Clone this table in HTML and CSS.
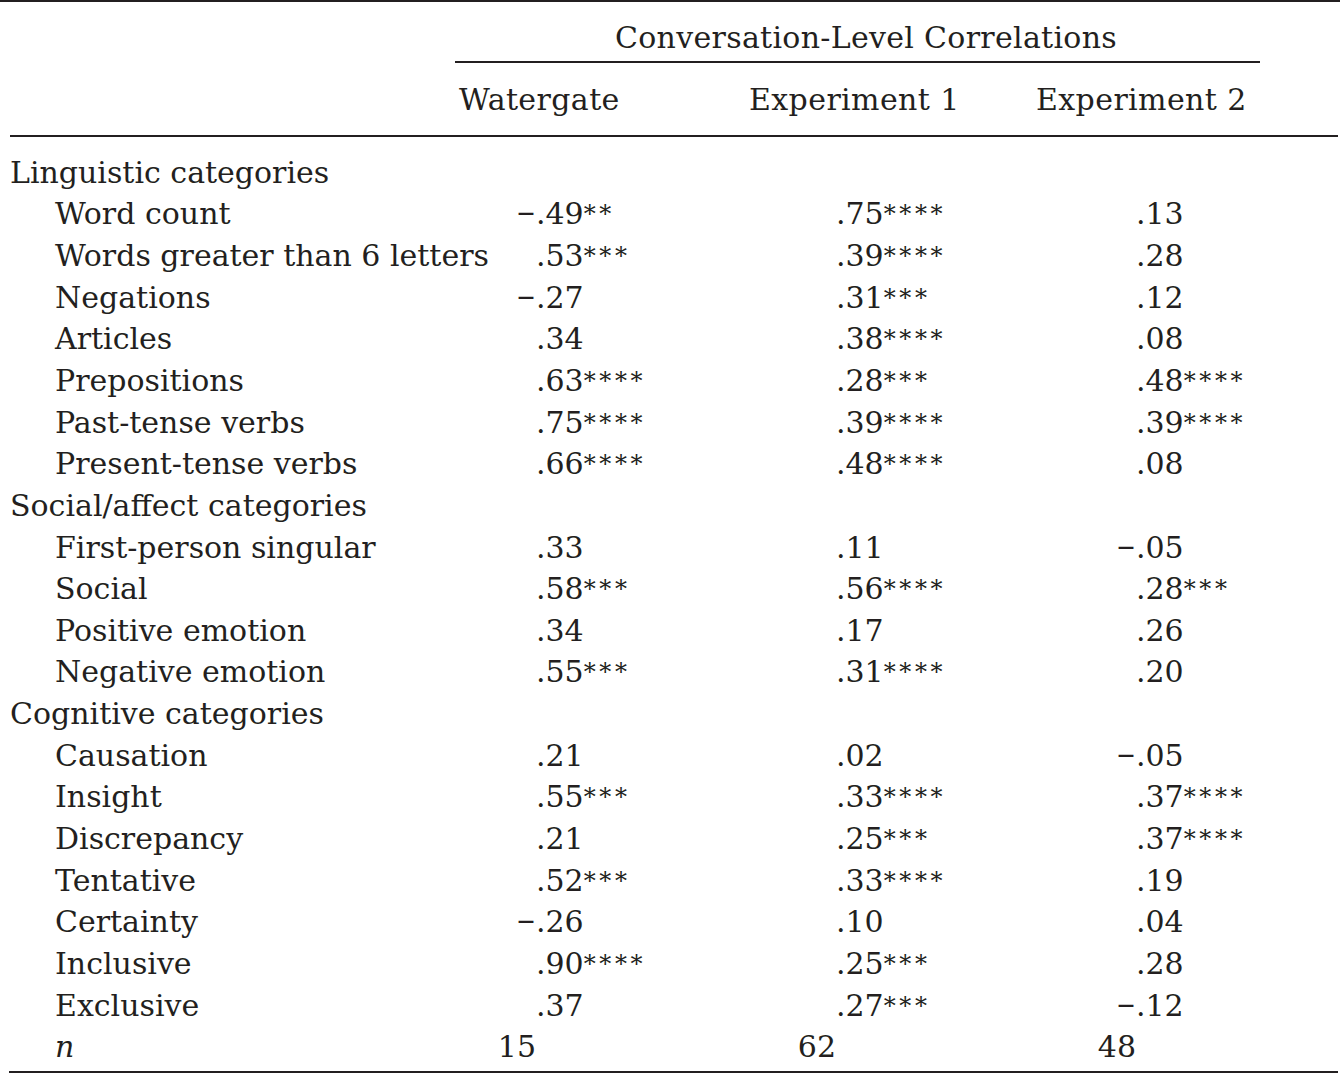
FILE: index.html
```html
<!DOCTYPE html>
<html lang="en">
<head>
<meta charset="utf-8">
<title>Conversation-Level Correlations</title>
<link rel="stylesheet" href="styles.css">
</head>
<body>
<div class="table">
  <div class="spanner-row">
    <div class="spanner">Conversation-Level Correlations</div>
  </div>
  <div class="head-row">
    <div></div>
    <div class="h">Watergate</div>
    <div class="h">Experiment 1</div>
    <div class="h">Experiment 2</div>
  </div>
  <div class="body">
    <div class="row"><div class="label">Linguistic categories</div></div>

    <div class="row"><div class="label sub">Word count</div>
      <div class="num"><span class="int neg">–</span>.49<span class="sig">**</span></div>
      <div class="num"><span class="int"></span>.75<span class="sig">****</span></div>
      <div class="num"><span class="int"></span>.13</div></div>

    <div class="row"><div class="label sub">Words greater than 6 letters</div>
      <div class="num"><span class="int"></span>.53<span class="sig">***</span></div>
      <div class="num"><span class="int"></span>.39<span class="sig">****</span></div>
      <div class="num"><span class="int"></span>.28</div></div>

    <div class="row"><div class="label sub">Negations</div>
      <div class="num"><span class="int neg">–</span>.27</div>
      <div class="num"><span class="int"></span>.31<span class="sig">***</span></div>
      <div class="num"><span class="int"></span>.12</div></div>

    <div class="row"><div class="label sub">Articles</div>
      <div class="num"><span class="int"></span>.34</div>
      <div class="num"><span class="int"></span>.38<span class="sig">****</span></div>
      <div class="num"><span class="int"></span>.08</div></div>

    <div class="row"><div class="label sub">Prepositions</div>
      <div class="num"><span class="int"></span>.63<span class="sig">****</span></div>
      <div class="num"><span class="int"></span>.28<span class="sig">***</span></div>
      <div class="num"><span class="int"></span>.48<span class="sig">****</span></div></div>

    <div class="row"><div class="label sub">Past-tense verbs</div>
      <div class="num"><span class="int"></span>.75<span class="sig">****</span></div>
      <div class="num"><span class="int"></span>.39<span class="sig">****</span></div>
      <div class="num"><span class="int"></span>.39<span class="sig">****</span></div></div>

    <div class="row"><div class="label sub">Present-tense verbs</div>
      <div class="num"><span class="int"></span>.66<span class="sig">****</span></div>
      <div class="num"><span class="int"></span>.48<span class="sig">****</span></div>
      <div class="num"><span class="int"></span>.08</div></div>

    <div class="row"><div class="label">Social/affect categories</div></div>

    <div class="row"><div class="label sub">First-person singular</div>
      <div class="num"><span class="int"></span>.33</div>
      <div class="num"><span class="int"></span>.11</div>
      <div class="num"><span class="int neg">–</span>.05</div></div>

    <div class="row"><div class="label sub">Social</div>
      <div class="num"><span class="int"></span>.58<span class="sig">***</span></div>
      <div class="num"><span class="int"></span>.56<span class="sig">****</span></div>
      <div class="num"><span class="int"></span>.28<span class="sig">***</span></div></div>

    <div class="row"><div class="label sub">Positive emotion</div>
      <div class="num"><span class="int"></span>.34</div>
      <div class="num"><span class="int"></span>.17</div>
      <div class="num"><span class="int"></span>.26</div></div>

    <div class="row"><div class="label sub">Negative emotion</div>
      <div class="num"><span class="int"></span>.55<span class="sig">***</span></div>
      <div class="num"><span class="int"></span>.31<span class="sig">****</span></div>
      <div class="num"><span class="int"></span>.20</div></div>

    <div class="row"><div class="label">Cognitive categories</div></div>

    <div class="row"><div class="label sub">Causation</div>
      <div class="num"><span class="int"></span>.21</div>
      <div class="num"><span class="int"></span>.02</div>
      <div class="num"><span class="int neg">–</span>.05</div></div>

    <div class="row"><div class="label sub">Insight</div>
      <div class="num"><span class="int"></span>.55<span class="sig">***</span></div>
      <div class="num"><span class="int"></span>.33<span class="sig">****</span></div>
      <div class="num"><span class="int"></span>.37<span class="sig">****</span></div></div>

    <div class="row"><div class="label sub">Discrepancy</div>
      <div class="num"><span class="int"></span>.21</div>
      <div class="num"><span class="int"></span>.25<span class="sig">***</span></div>
      <div class="num"><span class="int"></span>.37<span class="sig">****</span></div></div>

    <div class="row"><div class="label sub">Tentative</div>
      <div class="num"><span class="int"></span>.52<span class="sig">***</span></div>
      <div class="num"><span class="int"></span>.33<span class="sig">****</span></div>
      <div class="num"><span class="int"></span>.19</div></div>

    <div class="row"><div class="label sub">Certainty</div>
      <div class="num"><span class="int neg">–</span>.26</div>
      <div class="num"><span class="int"></span>.10</div>
      <div class="num"><span class="int"></span>.04</div></div>

    <div class="row"><div class="label sub">Inclusive</div>
      <div class="num"><span class="int"></span>.90<span class="sig">****</span></div>
      <div class="num"><span class="int"></span>.25<span class="sig">***</span></div>
      <div class="num"><span class="int"></span>.28</div></div>

    <div class="row"><div class="label sub">Exclusive</div>
      <div class="num"><span class="int"></span>.37</div>
      <div class="num"><span class="int"></span>.27<span class="sig">***</span></div>
      <div class="num"><span class="int neg">–</span>.12</div></div>

    <div class="row"><div class="label sub"><i>n</i></div>
      <div class="num"><span class="int">15</span></div>
      <div class="num"><span class="int">62</span></div>
      <div class="num"><span class="int">48</span></div></div>
  </div>
</div>
</body>
</html>
```

FILE: styles.css
```css
html, body {
  margin: 0;
  padding: 0;
  background: #ffffff;
}

body {
  font-family: "DejaVu Serif", "Liberation Serif", serif;
  font-size: 30px;
  color: #231f20;
}

.table {
  width: 1340px;
  border-top: 2px solid #231f20;
}

.spanner-row {
  padding-top: 15px;
  line-height: 41.65px;
}

.spanner {
  margin-left: 455px;
  width: 805px;
  padding-left: 17px;
  box-sizing: border-box;
  text-align: center;
  padding-bottom: 2.35px;
  border-bottom: 2px solid #231f20;
  white-space: nowrap;
  letter-spacing: 0.3px;
}

.head-row {
  display: grid;
  grid-template-columns: 449px 290px 287px 1fr;
  margin-left: 10px;
  margin-right: 2px;
  padding-top: 15.8px;
  padding-bottom: 14.55px;
  line-height: 41.65px;
  border-bottom: 2px solid #231f20;
  white-space: nowrap;
}

.h {
  letter-spacing: 0.4px;
}

.body {
  margin-left: 9px;
  margin-right: 2px;
  padding-top: 14.8px;
  padding-bottom: 3px;
  border-bottom: 2px solid #231f20;
}

.row {
  display: grid;
  grid-template-columns: 446px 300px 300px 1fr;
  height: 41.65px;
  line-height: 41.65px;
  white-space: nowrap;
}

.label {
  padding-left: 1px;
}

.label.sub {
  padding-left: 46px;
}

.num {
  white-space: nowrap;
}

.int {
  display: inline-block;
  width: 81px;
  text-align: right;
}

.int.neg {
  font-size: 36px;
  line-height: 30px;
  letter-spacing: 1px;
  position: relative;
  top: -1px;
}

.sig {
  font-size: 24px;
  letter-spacing: 3.6px;
  position: relative;
  top: -2px;
}
```
